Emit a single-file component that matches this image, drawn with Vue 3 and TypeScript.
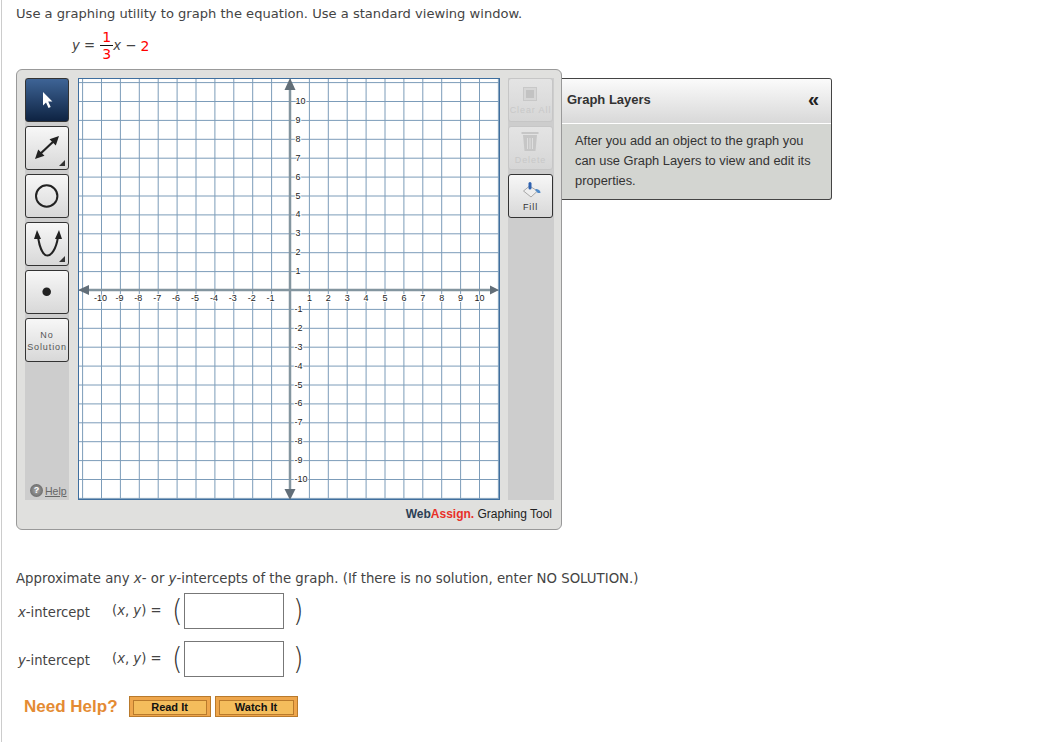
<script setup lang="ts">
const unit = 18.9
const c = 212.5 // centre of the 422px plane
const axis = 212
const size = 422
const steps: number[] = []
for (let i = -11; i <= 11; i++) steps.push(c + i * unit)
const nums: number[] = []
for (let i = -10; i <= 10; i++) if (i !== 0) nums.push(i)
const pos = (n: number) => c + n * unit
</script>

<template>
  <div class="page">
    <p class="prompt">Use a graphing utility to graph the equation. Use a standard viewing window.</p>
    <div class="equation">
      <i>y</i>&nbsp;=&nbsp;<span class="frac"><span class="red">1</span><span class="red bottom">3</span></span><i>x</i>&nbsp;−&nbsp;<span class="red">2</span>
    </div>

    <div class="tool-row">
      <div class="widget">
        <div class="tools">
          <button class="tbtn active" aria-label="Select">
            <svg width="42" height="42" viewBox="1 1 42 42"><path d="M18 14v13.500l3-3 2.500 5.500 2.200-1-2.500-5.500h4.200z" fill="#fff" /></svg>
          </button>
          <button class="tbtn" aria-label="Line">
            <svg width="42" height="42" viewBox="1 1 42 42">
              <path d="M14 29 30 14" stroke="#222" stroke-width="2.200" />
              <path d="M10 33l3.200-9.500 6.300 6.300zM34 10l-9.500 3.200 6.300 6.300z" fill="#222" />
              <path d="M40 40h-6l6-6z" fill="#333" />
            </svg>
          </button>
          <button class="tbtn" aria-label="Circle">
            <svg width="42" height="42" viewBox="1 1 42 42"><circle cx="21.700" cy="22" r="10.700" fill="none" stroke="#222" stroke-width="2" /></svg>
          </button>
          <button class="tbtn" aria-label="Parabola">
            <svg width="42" height="42" viewBox="1 1 42 42">
              <path d="M13 15C15 28 19 33.500 22.500 33.500S31 28 33 15" fill="none" stroke="#222" stroke-width="2" />
              <path d="M12 8l-3 9h7zM34 8l-4 9h7z" fill="#222" />
              <path d="M40 40h-6l6-6z" fill="#333" />
            </svg>
          </button>
          <button class="tbtn" aria-label="Point">
            <svg width="42" height="42" viewBox="1 1 42 42"><circle cx="21.700" cy="21.700" r="4.300" fill="#222" /></svg>
          </button>
          <button class="tbtn text-btn">No<br />Solution</button>
          <div class="help"><span class="help-dot">?</span><span class="help-link">Help</span></div>
        </div>

        <svg class="plane" :width="size" :height="size" :viewBox="`0 0 ${size} ${size}`">
          <rect width="422" height="422" fill="#fff" />
          <g stroke="#7c9cb9" stroke-width="1">
            <line v-for="s in steps" :key="'v' + s" :x1="s" y1="1" :x2="s" y2="421" />
            <line v-for="s in steps" :key="'h' + s" x1="1" :y1="s" x2="421" :y2="s" />
          </g>
          <rect x="0.500" y="0.500" width="421" height="421" fill="none" stroke="#3f6f9f" />
          <g fill="#83959f">
            <rect :x="axis - 1.250" y="10" width="2.500" height="402" />
            <rect x="10" :y="axis - 1.250" width="402" height="2.500" />
            <path :d="`M${axis} 0l5.500 12h-11z`" fill="#626e78" />
            <path :d="`M${axis} 422l5.500 -11h-11z`" fill="#626e78" />
            <path :d="`M0 ${axis}l11 -5v10z`" fill="#626e78" />
            <path :d="`M421 ${axis}l-9 -4.500v9z`" fill="#626e78" />
          </g>
          <g class="labels">
            <text v-for="n in nums" :key="'x' + n" :x="pos(n) + (n < 0 ? -1 : 0)" :y="c + 10" text-anchor="middle">{{ n }}</text>
            <text v-for="n in nums" :key="'y' + n" :x="c + (n < 0 ? 4 : 5)" :y="pos(-n) + 2.500">{{ n }}</text>
          </g>
        </svg>

        <div class="actions">
          <button class="tbtn disabled small" aria-label="Clear All">
            <svg width="22" height="22" viewBox="0 0 22 22"><rect x="3.500" y="5.500" width="13" height="13" fill="#d6d6d6" stroke="#c8c8c8" /><rect x="6" y="8" width="8" height="8" fill="#c2c2c2" /></svg>
            <span>Clear All</span>
          </button>
          <button class="tbtn disabled small" aria-label="Delete">
            <svg width="22" height="24" viewBox="0 0 22 24"><path d="M1.500 2h17v2h-17zM3 5h14l-1.500 16h-11z" fill="#c6c6c6" /><path d="M7.500 8v11M10 8v11M12.500 8v11" stroke="#dedede" /></svg>
            <span>Delete</span>
          </button>
          <button class="tbtn small" aria-label="Fill">
            <svg width="22" height="23" viewBox="0 0 22 23">
              <path d="M3.500 13l6-5 8 5-6.500 6z" fill="#eee" stroke="#8a8a8a" stroke-width="0.700" />
              <rect x="8.500" y="4" width="3" height="7.500" rx="1.500" fill="#2f62b0" />
              <path d="M15.500 11c2.500 0 5 1 5 4h-3c0-1-1-2-2-2z" fill="#4f8ac9" />
            </svg>
            <span class="dark">Fill</span>
          </button>
        </div>

        <div class="brand"><b class="web">Web</b><b class="assign">Assign.</b> Graphing Tool</div>
      </div>

      <aside class="layers">
        <header class="layers-head"><b>Graph Layers</b><span class="collapse">«</span></header>
        <div class="layers-body">After you add an object to the graph you can use Graph Layers to view and edit its properties.</div>
      </aside>
    </div>

    <p class="approx">Approximate any <i>x</i>- or <i>y</i>-intercepts of the graph. (If there is no solution, enter NO SOLUTION.)</p>

    <div class="answer">
      <span class="label"><i>x</i>-intercept</span>
      <span class="pair">(<i>x</i>, <i>y</i>) =</span>
      <span class="paren">(</span><span class="field"></span><span class="paren">)</span>
    </div>
    <div class="answer">
      <span class="label"><i>y</i>-intercept</span>
      <span class="pair">(<i>x</i>, <i>y</i>) =</span>
      <span class="paren">(</span><span class="field"></span><span class="paren">)</span>
    </div>

    <div class="need-help">
      <b>Need Help?</b>
      <span class="orange first"><span>Read It</span></span>
      <span class="orange"><span>Watch It</span></span>
    </div>
  </div>
</template>

<style>
body { margin: 0; background: #fff; }
</style>

<style scoped>
.page {
  width: 1040px;
  height: 742px;
  box-sizing: border-box;
  margin-left: 1px;
  border-left: 1px solid #ccc;
  padding: 5px 0 0 14px;
  font-family: "DejaVu Sans", sans-serif;
  font-size: 13px;
  color: #444;
  overflow: hidden;
}
.prompt { margin: 0; height: 17px; line-height: 18px; font-size: 13.080px; white-space: nowrap; }
.equation {
  display: flex;
  align-items: center;
  height: 47px;
  margin-left: 56px;
  font-size: 13.200px;
  white-space: pre;
}
.red { color: #f00; font-size: 14px; }
.frac {
  display: inline-flex;
  flex-direction: column;
  align-items: center;
  width: 13px;
  line-height: 16px;
  margin-left: 1px;
}
.bottom { border-top: 1px solid #111; width: 100%; text-align: center; }
.tool-row { display: flex; align-items: flex-start; }
.widget {
  position: relative;
  display: grid;
  grid-template-columns: 44px 422px 45px;
  column-gap: 9px;
  width: 546px;
  height: 461px;
  box-sizing: border-box;
  padding: 8px 0 0 8px;
  background: #e0e0de;
  border: 1px solid #999;
  border-radius: 6px;
}
.tools, .actions {
  position: relative;
  display: flex;
  flex-direction: column;
  gap: 4px;
  height: 422px;
  background: #cdcdcd;
}
.actions { margin-left: -1px; }
.tbtn {
  flex: none;
  box-sizing: border-box;
  width: 44px;
  height: 44px;
  margin: 0;
  padding: 0;
  border: 1px solid #333;
  border-radius: 3px;
  background: linear-gradient(#f7f7f7, #d8d8d8);
  font-family: "Liberation Sans", sans-serif;
  font-size: 9px;
  color: #555;
  display: flex;
  flex-direction: column;
  align-items: center;
  justify-content: center;
}
.active { background: linear-gradient(#3e6496, #0e2342); }
.text-btn { display: block; padding-top: 2px; line-height: 12px; letter-spacing: 0.900px; white-space: nowrap; }
.small { width: 45px; gap: 0; justify-content: flex-start; padding-top: 3px; }
.small span { font-size: 9px; letter-spacing: 0.900px; color: #c8c8c8; line-height: 12px; white-space: nowrap; }
.small span.dark { color: #333; }
.disabled { border-color: #c6c6c6; background: linear-gradient(#e4e4e4, #d6d6d6); }
.help {
  position: absolute;
  left: 5px;
  bottom: 3px;
  display: flex;
  align-items: center;
  gap: 2px;
  font-family: "Liberation Sans", sans-serif;
  font-size: 10.500px;
  color: #666;
}
.help-dot {
  width: 13px;
  height: 13px;
  border-radius: 50%;
  background: radial-gradient(#aaa, #555);
  color: #fff;
  font-size: 9px;
  font-weight: bold;
  text-align: center;
  line-height: 13px;
}
.help-link { text-decoration: underline; }
.plane { display: block; }
.labels text {
  font-family: "Liberation Sans", sans-serif;
  font-size: 9px;
  fill: #222;
  stroke: #fff;
  stroke-width: 2px;
  paint-order: stroke;
}
.brand {
  position: absolute;
  right: 9px;
  bottom: 8px;
  font-family: "Liberation Sans", sans-serif;
  font-size: 12px;
  color: #222;
}
.web { color: #2c3f55; }
.assign { color: #e8302a; }
.layers {
  width: 270px;
  margin-top: 9px;
  box-sizing: border-box;
  font-family: "Liberation Sans", sans-serif;
  border: 1px solid #444;
  border-left: 0;
  border-radius: 0 3px 3px 0;
  overflow: hidden;
  background: #d3d5d1;
}
.layers-head {
  display: flex;
  justify-content: space-between;
  align-items: center;
  height: 40px;
  padding: 0 12px 4px 5px;
  border-bottom: 1px solid #fff;
  background: linear-gradient(#fbfbfb, #d8d8d8);
  font-size: 13px;
  color: #333;
  box-sizing: content-box;
}
.collapse { font-size: 20px; font-weight: bold; line-height: 1; color: #222; }
.layers-body {
  padding: 7px 13px 8px 13px;
  font-size: 12.850px;
  line-height: 20px;
  color: #333;
}
.approx {
  margin: 40px 0 0;
  height: 17px;
  line-height: 17px;
  font-size: 13.300px;
  white-space: nowrap;
}
.answer {
  display: flex;
  align-items: center;
  height: 36px;
  margin: 6px 0 0 2px;
  font-size: 13.200px;
}
.answer + .answer { margin-top: 12px; }
.label { width: 94px; margin-top: 2px; }
.pair { width: 60px; margin-top: -2px; white-space: pre; }
.paren {
  font-family: "DejaVu Sans", sans-serif;
  font-weight: 200;
  font-size: 30px;
  line-height: 36px;
  color: #333;
  width: 12px;
  transform: scaleX(0.900);
  transform-origin: left center;
  text-align: left;
}
.field {
  width: 98px;
  height: 34px;
  border: 1px solid #777;
  box-sizing: content-box;
  margin-right: 9px;
  background: #fff;
}
.need-help {
  display: flex;
  align-items: center;
  gap: 4px;
  margin: 19px 0 0 8px;
  font-family: "Liberation Sans", sans-serif;
}
.need-help b { font-size: 17px; color: #e48b33; margin-right: 7px; }
.orange {
  box-sizing: border-box;
  width: 83px;
  height: 21px;
  padding: 3px;
  background: #eea64c;
  border: 1px solid #b97a2c;
}
.orange.first { width: 82px; }
.orange span {
  display: block;
  height: 13px;
  border: 1px solid #b97a2c;
  background: #f4bd5c;
  text-align: center;
  font-size: 11px;
  font-weight: bold;
  line-height: 13px;
  color: #111;
}
</style>
